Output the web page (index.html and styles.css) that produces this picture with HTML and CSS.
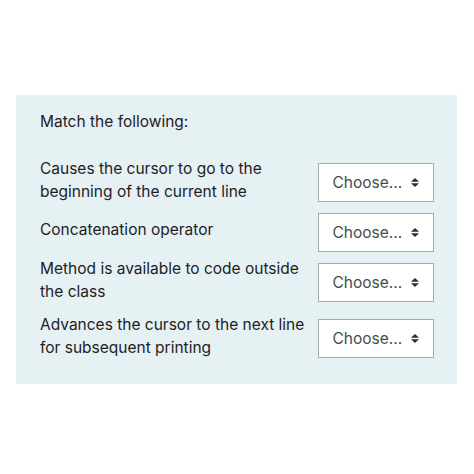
FILE: index.html
```html
<!DOCTYPE html>
<html lang="en">
<head>
<meta charset="utf-8">
<title>Match the following</title>
<link rel="stylesheet" href="styles.css">
</head>
<body>
<div class="panel">
  <div class="prompt">Match the following:</div>
  <div class="rows">
    <div class="row">
      <div class="label">Causes the cursor to go to the beginning of the current line</div>
      <div class="select"><span>Choose...</span><svg class="arrows" width="8" height="9" viewBox="0 0 8 9"><path d="M4 0 L8 3.7 L0 3.7 Z M4 9 L8 5.3 L0 5.3 Z" fill="#2b2f33"/></svg></div>
    </div>
    <div class="row">
      <div class="label">Concatenation operator</div>
      <div class="select"><span>Choose...</span><svg class="arrows" width="8" height="9" viewBox="0 0 8 9"><path d="M4 0 L8 3.7 L0 3.7 Z M4 9 L8 5.3 L0 5.3 Z" fill="#2b2f33"/></svg></div>
    </div>
    <div class="row">
      <div class="label">Method is available to code outside the class</div>
      <div class="select"><span>Choose...</span><svg class="arrows" width="8" height="9" viewBox="0 0 8 9"><path d="M4 0 L8 3.7 L0 3.7 Z M4 9 L8 5.3 L0 5.3 Z" fill="#2b2f33"/></svg></div>
    </div>
    <div class="row">
      <div class="label">Advances the cursor to the next line for subsequent printing</div>
      <div class="select"><span>Choose...</span><svg class="arrows" width="8" height="9" viewBox="0 0 8 9"><path d="M4 0 L8 3.7 L0 3.7 Z M4 9 L8 5.3 L0 5.3 Z" fill="#2b2f33"/></svg></div>
    </div>
  </div>
</div>
</body>
</html>
```
FILE: styles.css
```css
html, body {
  margin: 0;
  padding: 0;
  background: #ffffff;
}
body {
  font-family: Inter, "Liberation Sans", Arial, sans-serif;
  font-size: 15.5px;
  line-height: 23.3px;
  color: #1d2125;
}
.panel {
  margin: 95px 17px 0 16px;
  padding: 14.5px 23px 19.6px 24px;
  background: #e6f1f4;
}
.prompt {
  margin-bottom: 24px;
}
.rows {
  display: flex;
  flex-direction: column;
  gap: 4.6px;
}
.row {
  display: flex;
  align-items: center;
  justify-content: space-between;
}
.label {
  width: 275px;
  padding-bottom: 5px;
}
.select {
  box-sizing: border-box;
  width: 116px;
  height: 39px;
  border: 1.5px solid #a3aab0;
  background: #ffffff;
  display: flex;
  align-items: center;
  justify-content: space-between;
  padding: 0 14px 0 13.5px;
  color: #464b50;
}
.arrows {
  display: block;
}
```
